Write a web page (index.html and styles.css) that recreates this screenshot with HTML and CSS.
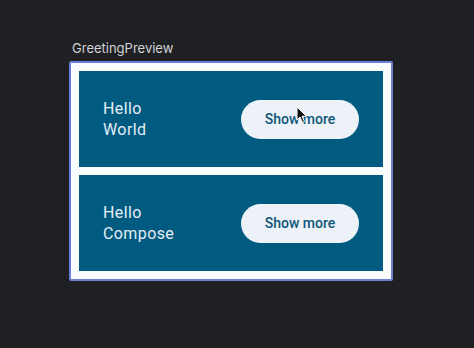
FILE: index.html
```html
<!doctype html>
<html lang="en">
<head>
  <meta charset="UTF-8">
  <meta name="viewport" content="width=device-width, initial-scale=1.0">
  <title>GreetingPreview</title>
  <link rel="stylesheet" href="styles.css">
</head>
<body>
  <div class="preview">
    <div class="preview-label">GreetingPreview</div>
    <div class="preview-frame">
      <div class="greeting-card">
        <div class="greeting-text">Hello<br>World</div>
        <button class="show-button">Show more</button>
      </div>
      <div class="greeting-card">
        <div class="greeting-text">Hello<br>Compose</div>
        <button class="show-button">Show more</button>
      </div>
    </div>
    <!-- pointeur de la souris -->
    <svg class="cursor" width="12" height="18" viewBox="0 0 12 18">
      <path d="M1 1 L1 14 L4 11 L6.5 16.5 L8.5 15.6 L6 10.3 L10.5 10.3 Z" fill="#111" stroke="#fff" stroke-width="1"/>
    </svg>
  </div>
</body>
</html>
```

FILE: styles.css
```css
body {
  margin: 0;
  padding: 0;
  width: 474px;
  height: 348px;
  background: #1f2023;
  font-family: Roboto, 'Noto Sans', sans-serif;
  overflow: hidden;
}

.preview {
  position: relative;
  display: flex;
  flex-direction: column;
  align-items: flex-start;
  padding: 40px 0 0 69px;
}

.preview-label {
  font-family: Inter, 'Noto Sans', sans-serif;
  font-size: 13px;
  line-height: 16px;
  color: #d2d3d6;
  padding-left: 3px;
  margin-bottom: 5px;
}

.preview-frame {
  display: flex;
  flex-direction: column;
  gap: 8px;
  padding: 8px;
  background: #fbfcfe;
  border: 2px solid #6a7fd6;
  border-radius: 2px;
}

.greeting-card {
  width: 256px;
  height: 96px;
  padding: 0 24px;
  background: #015b80;
  display: flex;
  align-items: center;
  justify-content: space-between;
}

.greeting-text {
  font-size: 16px;
  line-height: 21px;
  color: #e4eef6;
  letter-spacing: 0.4px;
}

.show-button {
  width: 118px;
  height: 39px;
  border: none;
  border-radius: 20px;
  background: #edf2f8;
  color: #0d5579;
  font-family: Roboto, 'Noto Sans', sans-serif;
  font-size: 14px;
  font-weight: 500;
  padding: 0;
}

.cursor {
  position: absolute;
  left: 296px;
  top: 106px;
}
```
